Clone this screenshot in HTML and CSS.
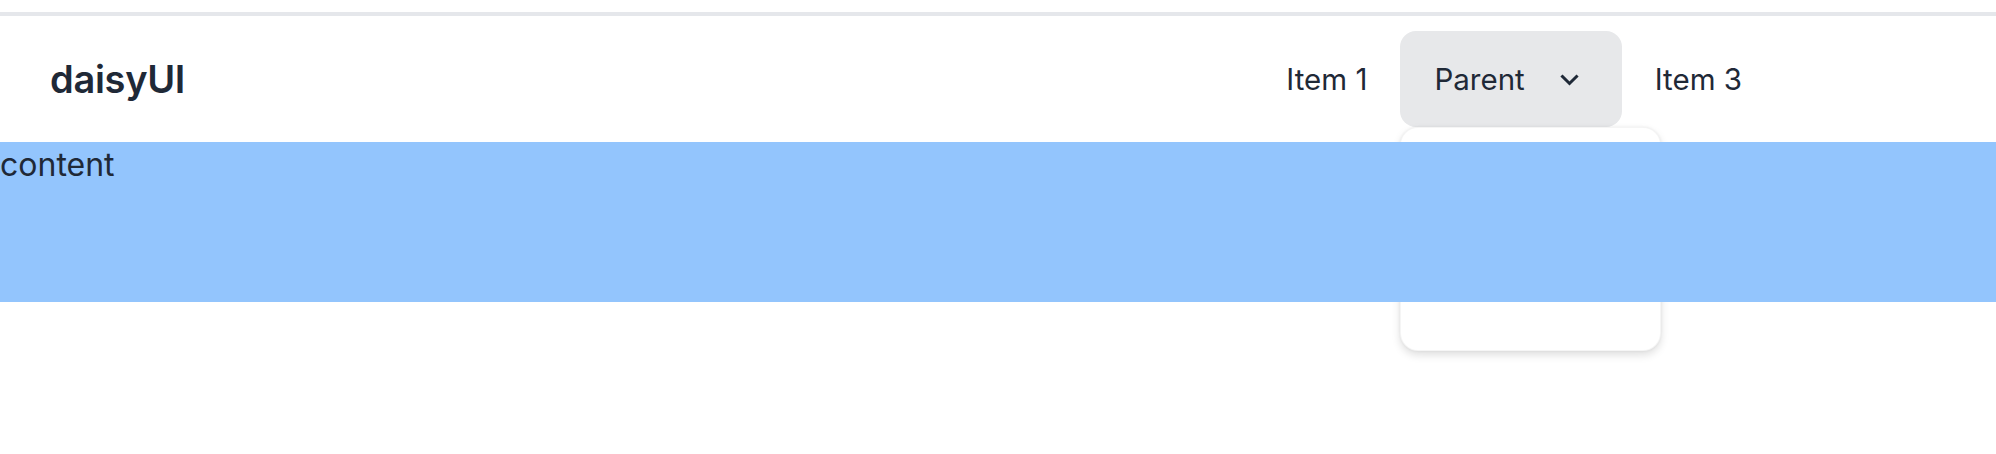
FILE: index.html
```html
<!DOCTYPE html>
<html lang="en">
<head>
<meta charset="utf-8">
<title>daisyUI navbar</title>
<link rel="stylesheet" href="styles.css">
</head>
<body>
<div class="frame">
  <div class="rule"></div>
  <nav class="navbar">
    <div class="brand"><a class="brand-btn">daisyUI</a></div>
    <ul class="menu">
      <li class="menu-item"><a>Item 1</a></li>
      <li class="menu-item parent">
        <a class="parent-btn">
          <span>Parent</span>
          <svg class="chevron" width="19" height="12" viewBox="0 0 19 12" aria-hidden="true">
            <polyline points="2.5,2.5 9.5,9.5 16.5,2.5" fill="none" stroke="#1f2937" stroke-width="3" stroke-linecap="square" stroke-linejoin="miter"/>
          </svg>
        </a>
        <div class="dropdown"></div>
      </li>
      <li class="menu-item"><a>Item 3</a></li>
    </ul>
  </nav>
  <main class="content">content</main>
</div>
</body>
</html>
```

FILE: styles.css
```css
html, body {
  margin: 0;
  padding: 0;
  background: #ffffff;
}

body {
  font-family: Inter, "Noto Sans", "Liberation Sans", sans-serif;
  color: #1f2937;
  min-height: 454px;
}

.frame {
  padding-top: 12px;
}

.rule {
  height: 4px;
  background: #e5e7eb;
}

.navbar {
  display: flex;
  align-items: center;
  height: 126px;
  padding: 0 221px 0 16px;
  box-sizing: border-box;
}

.brand {
  flex: 1;
  display: flex;
  align-items: center;
}

.brand-btn {
  padding: 0 32px 0 34px;
  font-size: 38px;
  font-weight: 600;
  letter-spacing: -0.3px;
  color: #1f2937;
}

.menu {
  display: flex;
  align-items: center;
  list-style: none;
  margin: 0;
  padding: 0;
}

.menu-item {
  position: relative;
  font-size: 29.5px;
}

.menu-item > a {
  display: flex;
  align-items: center;
  height: 96px;
  padding: 0 33px;
  color: #1f2937;
  box-sizing: border-box;
}

.menu-item > a.parent-btn {
  padding: 0 43px 0 34px;
  background: #e7e8ea;
  border-radius: 16px;
  gap: 35px;
}

.chevron {
  display: block;
  margin-top: 1px;
}

.dropdown {
  position: absolute;
  top: 96px;
  left: 0;
  width: 261px;
  height: 224px;
  box-sizing: border-box;
  background: #ffffff;
  border: 1px solid rgba(0, 0, 0, 0.04);
  border-radius: 18px;
  box-shadow: 0 4px 8px rgba(0, 0, 0, 0.13), 0 0 3px rgba(0, 0, 0, 0.06);
}

.content {
  position: relative;
  display: block;
  height: 160px;
  background: #93c5fd;
  font-size: 32px;
  line-height: 46px;
  color: #1f2937;
}
```
